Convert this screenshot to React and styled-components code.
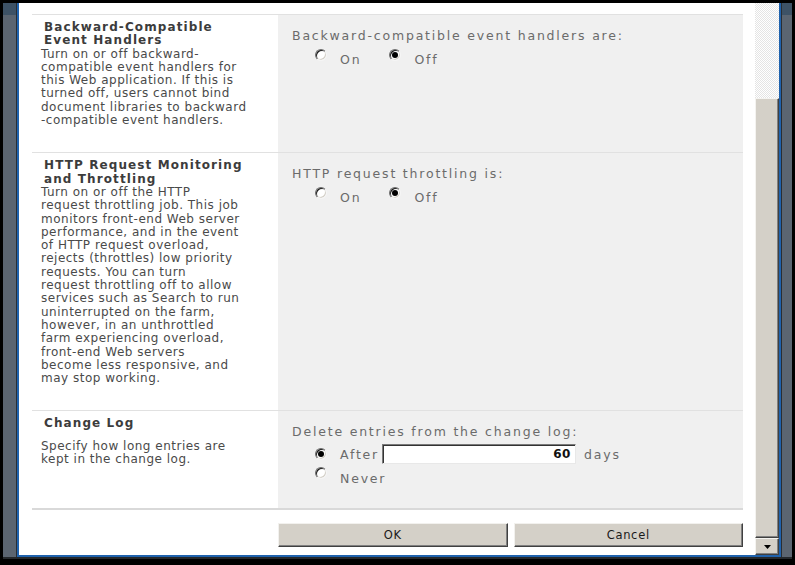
import React from 'react'
import styled, { createGlobalStyle } from 'styled-components'

const GlobalStyle = createGlobalStyle`
  html, body {
    margin: 0;
    padding: 0;
    background: #000;
  }
  * { box-sizing: border-box; }
`

const Screen = styled.div`
  width: 795px;
  height: 565px;
  padding: 3px 3px 6px 3px;
  background: #000;
  display: flex;
  font-family: "DejaVu Sans", Verdana, sans-serif;
`

const Window = styled.div`
  flex: 1;
  display: flex;
  border-bottom: 2px solid #24282c;
  background: #5b6571;
`

const SideStrip = styled.div`
  width: ${p => p.w}px;
  background: linear-gradient(#3d5266 0 12px, #5b6571 12px);
  border-${p => p.edge}: 1px solid #2a2e33;
`

const Viewport = styled.div`
  flex: 1;
  display: flex;
  border: 2px solid #1f62ad;
  border-top: none;
`

const Page = styled.div`
  flex: 1;
  background: #fff;
  padding: 11px 12px 0 13px;
  overflow: hidden;
`

const Section = styled.div`
  display: grid;
  grid-template-columns: 246px 1fr;
  border-top: 1px solid #e1e1e1;
`

const Desc = styled.div`
  padding: 6px 0 25px 12px;
  color: #4a4a4a;
  font-size: 12px;
  line-height: 13.3px;
  white-space: nowrap;
`

const Heading = styled.div`
  font-weight: bold;
  color: #3c3c3c;
  letter-spacing: 1.1px;
  margin-bottom: ${p => p.gap || 0}px;
`

const Body = styled.div`
  letter-spacing: 0.5px;
  margin-left: -3px;
`

const Control = styled.div`
  background: #f0f0f0;
  padding: 14px 0 22px 14px;
  color: #6b6b6b;
  font-size: 12.5px;
  white-space: nowrap;
`

const Prompt = styled.div`
  line-height: 14px;
  letter-spacing: ${p => p.ls || 1.8}px;
`

const RadioRow = styled.div`
  display: flex;
  align-items: ${p => (p.center ? 'center' : 'flex-start')};
  padding-left: 23px;
  margin-top: ${p => p.top || 0}px;
`

const Option = styled.label`
  display: flex;
  align-items: ${p => (p.center ? 'center' : 'flex-start')};
  margin-right: ${p => (p.last ? 0 : 28)}px;
`

const Radio = styled.span`
  position: relative;
  width: 12px;
  height: 12px;
  margin-right: 13px;
  border-radius: 50%;
  background: #fff;
  border: 1px solid;
  border-color: #6c6c6c #f4f4f4 #f4f4f4 #6c6c6c;
  box-shadow: inset 1px 1px 0 #1c1c1c, inset -1px -1px 0 #d4d0c8;
  flex-shrink: 0;
  &::after {
    content: '';
    display: ${p => (p.checked ? 'block' : 'none')};
    position: absolute;
    left: 2px;
    top: 2px;
    width: 6px;
    height: 6px;
    border-radius: 50%;
    background: #000;
  }
`

const OptionText = styled.span`
  padding-top: ${p => (p.drop === undefined ? 4 : p.drop)}px;
  line-height: 14px;
  letter-spacing: 1.8px;
`

const DaysInput = styled.div`
  width: 194px;
  height: 20px;
  margin-left: 3px;
  background: #fff;
  border: 1px solid;
  border-color: #7a7a7a #e8e8e8 #e8e8e8 #7a7a7a;
  box-shadow: inset 1px 1px 0 #333;
  color: #111;
  font-size: 12px;
  font-weight: bold;
  line-height: 18px;
  text-align: right;
  padding-right: 4px;
  letter-spacing: 0.6px;
`

const Unit = styled.span`
  margin-left: 8px;
  letter-spacing: 1.8px;
`

const Footer = styled.div`
  border-top: 2px solid #d9d9d9;
  padding: 13px 0 0 246px;
  display: flex;
  gap: 6px;
`

const Button = styled.button`
  flex: 1;
  height: 24px;
  background: #d4d0c8;
  border: 1px solid;
  border-color: #f2f1ee #404040 #404040 #f2f1ee;
  box-shadow: inset -1px -1px 0 #808080;
  font-family: "DejaVu Sans", Verdana, sans-serif;
  font-size: 11.5px;
  letter-spacing: 0.7px;
  color: #1a1a1a;
  padding: 0;
`

const Scrollbar = styled.div`
  width: 24px;
  display: flex;
  flex-direction: column;
  background: #fff;
`

const Track = styled.div`
  height: 95px;
  background: repeating-conic-gradient(#ffffff 0 25%, #e4e4e4 0 50%) 0 0 / 2px 2px;
`

const Thumb = styled.div`
  flex: 1;
  background: #d4d0c8;
  border: 1px solid;
  border-color: #f4f3f0 #404040 #404040 #f4f3f0;
  box-shadow: inset -1px -1px 0 #808080;
`

const ArrowButton = styled(Thumb)`
  flex: 0 0 17px;
  display: flex;
  align-items: center;
  justify-content: center;
`

const descriptions = [
  {
    title: ['Backward-Compatible', 'Event Handlers'],
    lines: [
      'Turn on or off backward-',
      'compatible event handlers for',
      'this Web application. If this is',
      'turned off, users cannot bind',
      'document libraries to backward',
      '-compatible event handlers.',
    ],
    prompt: 'Backward-compatible event handlers are:',
  },
  {
    title: ['HTTP Request Monitoring', 'and Throttling'],
    lines: [
      'Turn on or off the HTTP',
      'request throttling job. This job',
      'monitors front-end Web server',
      'performance, and in the event',
      'of HTTP request overload,',
      'rejects (throttles) low priority',
      'requests. You can turn',
      'request throttling off to allow',
      'services such as Search to run',
      'uninterrupted on the farm,',
      'however, in an unthrottled',
      'farm experiencing overload,',
      'front-end Web servers',
      'become less responsive, and',
      'may stop working.',
    ],
    prompt: 'HTTP request throttling is:',
  },
]

function Lines({ items }) {
  return items.map((t, i) => (
    <React.Fragment key={i}>
      {t}
      {i < items.length - 1 && <br />}
    </React.Fragment>
  ))
}

function OnOffSection({ title, lines, prompt }) {
  return (
    <Section>
      <Desc>
        <Heading><Lines items={title} /></Heading>
        <Body><Lines items={lines} /></Body>
      </Desc>
      <Control>
        <Prompt>{prompt}</Prompt>
        <RadioRow top={6}>
          <Option><Radio /><OptionText>On</OptionText></Option>
          <Option><Radio checked /><OptionText>Off</OptionText></Option>
        </RadioRow>
      </Control>
    </Section>
  )
}

export default function App() {
  return (
    <>
      <GlobalStyle />
      <Screen>
        <Window>
          <SideStrip w={14} edge="right" />
          <Viewport>
            <Page>
              {descriptions.map(d => (
                <OnOffSection key={d.prompt} {...d} />
              ))}
              <Section>
                <Desc>
                  <Heading gap={9}>Change Log</Heading>
                  <Body>
                    Specify how long entries are<br />
                    kept in the change log.
                  </Body>
                </Desc>
                <Control>
                  <Prompt>Delete entries from the change log:</Prompt>
                  <RadioRow top={5} center>
                    <Option center last>
                      <Radio checked /><OptionText drop={2}>After</OptionText>
                    </Option>
                    <DaysInput>60</DaysInput>
                    <Unit>days</Unit>
                  </RadioRow>
                  <RadioRow top={3}>
                    <Option><Radio /><OptionText drop={5}>Never</OptionText></Option>
                  </RadioRow>
                </Control>
              </Section>
              <Footer>
                <Button>OK</Button>
                <Button>Cancel</Button>
              </Footer>
            </Page>
            <Scrollbar>
              <Track />
              <Thumb />
              <ArrowButton>
                <svg width="7" height="4" viewBox="0 0 7 4">
                  <path d="M0 0h7L3.5 4z" fill="#000" />
                </svg>
              </ArrowButton>
            </Scrollbar>
          </Viewport>
          <SideStrip w={11} edge="left" />
        </Window>
      </Screen>
    </>
  )
}
